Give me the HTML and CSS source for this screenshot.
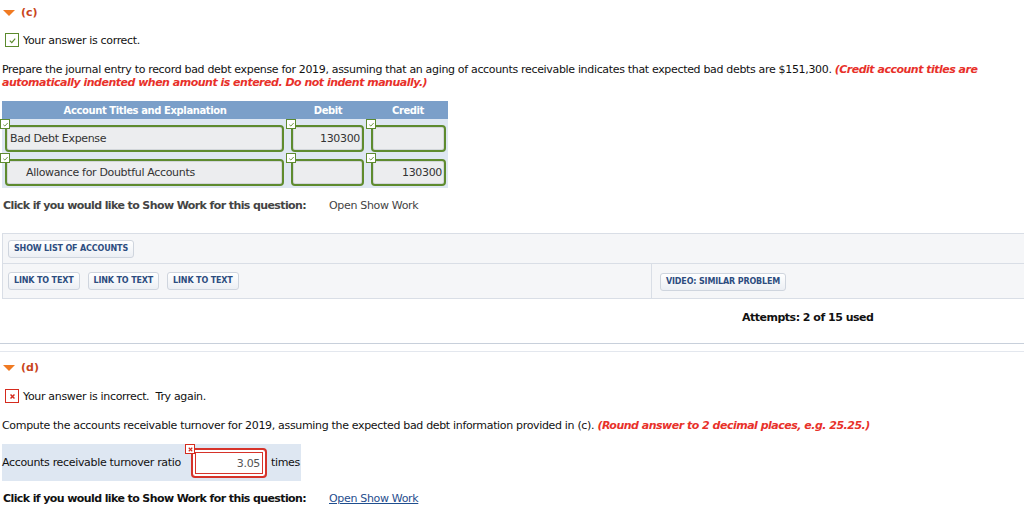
FILE: index.html
```html
<!DOCTYPE html>
<html>
<head>
<meta charset="utf-8">
<link rel="stylesheet" href="styles.css">
</head>
<body>
<div class="part">
  <div class="part-head"><span class="tri"></span><span class="part-label">(c)</span></div>
  <div class="status"><span class="ico ok"><svg viewBox="0 0 10 10" width="9" height="9"><path d="M2 5.2 L4.2 7.3 L8 2.8" fill="none" stroke="#5b8a2c" stroke-width="1.3"/></svg></span>Your answer is correct.</div>
  <p class="question">Prepare the journal entry to record bad debt expense for 2019, assuming that an aging of accounts receivable indicates that expected bad debts are $151,300. <em class="note">(Credit account titles are automatically indented when amount is entered. Do not indent manually.)</em></p>

  <div class="journal">
    <div class="jhead">
      <div class="c-acct">Account Titles and Explanation</div>
      <div class="c-deb">Debit</div>
      <div class="c-cred">Credit</div>
    </div>
    <div class="jrow">
      <div class="c-acct"><div class="field"><span class="mini ok"><svg viewBox="0 0 8 8" width="7" height="7"><path d="M1.5 4.2 L3.3 5.8 L6.5 2.3" fill="none" stroke="#5b8a2c" stroke-width="1"/></svg></span><span class="val">Bad Debt Expense</span></div></div>
      <div class="c-deb"><div class="field num"><span class="mini ok"><svg viewBox="0 0 8 8" width="7" height="7"><path d="M1.5 4.2 L3.3 5.8 L6.5 2.3" fill="none" stroke="#5b8a2c" stroke-width="1"/></svg></span><span class="val">130300</span></div></div>
      <div class="c-cred"><div class="field num"><span class="mini ok"><svg viewBox="0 0 8 8" width="7" height="7"><path d="M1.5 4.2 L3.3 5.8 L6.5 2.3" fill="none" stroke="#5b8a2c" stroke-width="1"/></svg></span><span class="val"></span></div></div>
    </div>
    <div class="jrow">
      <div class="c-acct"><div class="field"><span class="mini ok"><svg viewBox="0 0 8 8" width="7" height="7"><path d="M1.5 4.2 L3.3 5.8 L6.5 2.3" fill="none" stroke="#5b8a2c" stroke-width="1"/></svg></span><span class="val indent">Allowance for Doubtful Accounts</span></div></div>
      <div class="c-deb"><div class="field num"><span class="mini ok"><svg viewBox="0 0 8 8" width="7" height="7"><path d="M1.5 4.2 L3.3 5.8 L6.5 2.3" fill="none" stroke="#5b8a2c" stroke-width="1"/></svg></span><span class="val"></span></div></div>
      <div class="c-cred"><div class="field num"><span class="mini ok"><svg viewBox="0 0 8 8" width="7" height="7"><path d="M1.5 4.2 L3.3 5.8 L6.5 2.3" fill="none" stroke="#5b8a2c" stroke-width="1"/></svg></span><span class="val">130300</span></div></div>
    </div>
  </div>

  <div class="showwork grey"><span class="sw-label">Click if you would like to Show Work for this question:</span><span class="sw-link plain">Open Show Work</span></div>

  <div class="tools">
    <div class="tools-row first">
      <span class="btn">SHOW LIST OF ACCOUNTS</span>
    </div>
    <div class="tools-row second">
      <div class="tools-left">
        <span class="btn">LINK TO TEXT</span>
        <span class="btn">LINK TO TEXT</span>
        <span class="btn">LINK TO TEXT</span>
      </div>
      <div class="tools-right">
        <span class="btn">VIDEO: SIMILAR PROBLEM</span>
      </div>
    </div>
  </div>

  <div class="attempts">Attempts: 2 of 15 used</div>
</div>

<div class="divider"></div>

<div class="part d">
  <div class="part-head"><span class="tri"></span><span class="part-label">(d)</span></div>
  <div class="status"><span class="ico bad"><svg viewBox="0 0 10 10" width="9" height="9"><path d="M2.8 2.8 L7.2 7.2 M7.2 2.8 L2.8 7.2" fill="none" stroke="#d52b1e" stroke-width="1.6"/></svg></span>Your answer is incorrect.&nbsp; Try again.</div>
  <p class="question">Compute the accounts receivable turnover for 2019, assuming the expected bad debt information provided in (c). <em class="note">(Round answer to 2 decimal places, e.g. 25.25.)</em></p>

  <div class="ratio">
    <span class="ratio-label">Accounts receivable turnover ratio</span>
    <div class="rfield"><span class="mini bad"><svg viewBox="0 0 8 8" width="7" height="7"><path d="M2 2 L6 6 M6 2 L2 6" fill="none" stroke="#d52b1e" stroke-width="1.3"/></svg></span><span class="val">3.05</span></div>
    <span class="unit">times</span>
  </div>

  <div class="showwork"><span class="sw-label">Click if you would like to Show Work for this question:</span><span class="sw-link">Open Show Work</span></div>
</div>
</body>
</html>
```

FILE: styles.css
```css
* { box-sizing: border-box; }
body {
  margin: 0;
  font-family: "DejaVu Sans", Verdana, sans-serif;
  font-size: 11px;
  letter-spacing: -0.33px;
  color: #111;
  background: #fff;
  width: 1024px;
  height: 510px;
  overflow: hidden;
}
.part { padding: 0; }
.part-head {
  display: flex;
  align-items: center;
  height: 14px;
  margin-top: 5px;
  padding-left: 3px;
}
.tri {
  width: 0; height: 0;
  border-left: 6px solid transparent;
  border-right: 6px solid transparent;
  border-top: 6px solid #f07a22;
  margin-right: 6px;
  margin-top: 1px;
}
.part-label {
  font-weight: bold;
  color: #c9461c;
  letter-spacing: 0;
}
.status {
  display: flex;
  align-items: center;
  margin-top: 14px;
  padding-left: 5px;
  height: 14px;
}
.ico {
  width: 14px; height: 14px;
  border: 1px solid;
  display: flex; align-items: center; justify-content: center;
  margin-right: 4px;
  background: #fff;
}
.ico.ok { border-color: #5b8a2c; }
.ico.bad { border-color: #d52b1e; }
.question {
  margin: 16px 0 0 2px;
  line-height: 13px;
  width: 1000px;
}
.note {
  color: #e8312a;
  font-weight: bold;
  font-style: italic;
  letter-spacing: -0.5px;
}
.journal {
  margin: 12px 0 0 2px;
  width: 446px;
  background: #dee7f2;
}
.jhead {
  display: flex;
  background: #7b9fc9;
  color: #fff;
  font-weight: bold;
  font-size: 10px;
  letter-spacing: -0.4px;
  height: 18px;
  align-items: center;
}
.jhead > div { text-align: center; }
.c-acct { width: 286px; }
.c-deb { width: 80px; }
.c-cred { width: 80px; }
.jrow { display: flex; height: 34px; }
.jrow .c-acct { padding: 6px 4px 0 3px; }
.jrow .c-deb { padding: 6px 4px 0 3px; }
.jrow .c-cred { padding: 6px 2px 0 3px; }
.jrow + .jrow { height: 35px; }
.field {
  position: relative;
  height: 27px;
  border: 2px solid #5e8b2f;
  border-radius: 4px;
  background: #ecedef;
  box-shadow: inset 0 0 0 1px #d2d6da;
  display: flex;
  align-items: center;
  padding: 0 3px;
  color: #333;
}
.field.num { justify-content: flex-end; padding-right: 2px; }
.val.indent { padding-left: 16px; }
.mini {
  position: absolute;
  left: -7px; top: -8px;
  width: 10px; height: 10px;
  background: #fff;
  border: 1px solid;
  display: flex; align-items: center; justify-content: center;
}
.mini.ok { border-color: #5e8b2f; }
.mini.bad { border-color: #d52b1e; }
.showwork {
  display: flex;
  margin: 10px 0 0 3px;
  height: 14px;
  align-items: center;
  white-space: nowrap;
}
.sw-label { font-weight: bold; color: #111; width: 326px; flex: none; letter-spacing: -0.6px; }
.showwork.grey .sw-label { color: #444; }
.sw-link { color: #1f4e8e; text-decoration: underline; }
.sw-link.plain { color: #444; text-decoration: none; }
.tools {
  margin: 21px 0 0 2px;
  background: #f5f6f8;
  border: 1px solid #d9dee6;
  border-right: none;
}
.tools-row { display: flex; align-items: center; }
.tools-row.first { height: 29px; padding-left: 5px; }
.tools-row.second { height: 35px; border-top: 1px solid #d9dee6; }
.tools-left { display: flex; gap: 8px; padding-left: 5px; width: 649px; height: 100%; align-items: center; border-right: 1px solid #d9dee6; }
.tools-right { padding-left: 8px; padding-top: 2px; }
.btn {
  display: inline-block;
  font-size: 8px;
  font-weight: bold;
  color: #2d4d80;
  background: linear-gradient(#ffffff, #eceff4);
  border: 1px solid #cfd5de;
  border-radius: 3px;
  padding: 3px 5px;
  line-height: 10px;
  letter-spacing: -0.15px;
}
.attempts {
  margin: 12px 0 0 742px;
  font-weight: bold;
  height: 14px;
  letter-spacing: -0.5px;
}
.divider {
  margin-top: 18px;
  height: 9px;
  border-top: 1px solid #c8d0db;
  border-bottom: 1px solid #e3e7ee;
}
.part.d .part-head { margin-top: 8px; }
.part.d .status { margin-top: 15px; }
.part.d .question { margin-top: 16px; }
.ratio {
  margin: 12px 0 0 2px;
  width: 299px;
  height: 37px;
  background: #dee7f2;
  display: flex;
  align-items: center;
  white-space: nowrap;
}
.ratio-label { width: 189px; flex: none; }
.rfield {
  position: relative;
  width: 76px;
  height: 30px;
  flex: none;
  border: 2px solid #d6332a;
  border-radius: 4px;
  background: #fff;
  box-shadow: inset 0 0 0 2px #fff, inset 0 0 0 3px #d6332a;
  display: flex;
  align-items: center;
  justify-content: flex-end;
  padding-right: 5px;
  color: #555;
  margin-top: 1px;
}
.rfield .mini { left: -8px; top: -6px; }
.unit { margin-left: 4px; }
.part.d .showwork { margin-top: 10px; }
```
